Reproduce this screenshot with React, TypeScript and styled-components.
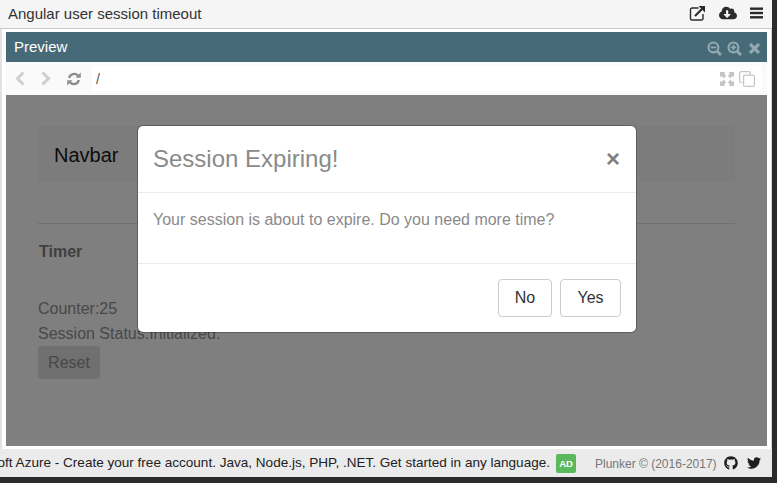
import React from 'react';
import styled, { createGlobalStyle } from 'styled-components';
import { FaCloudDownloadAlt, FaGithub, FaTwitter } from 'react-icons/fa';

const GlobalStyle = createGlobalStyle`
  html, body {
    margin: 0;
    height: 100%;
    overflow: hidden;
    background: #2b2b2b;
    font-family: "Liberation Sans", Arial, sans-serif;
  }
  * {
    box-sizing: border-box;
  }
`

const Frame = styled.div`
  width: 772px;
  height: 477px;
  display: flex;
  flex-direction: column;
  background: #fff;
`

const TopBar = styled.header`
  height: 29px;
  flex: none;
  display: flex;
  align-items: center;
  justify-content: space-between;
  padding: 0 9px 2px 8px;
  background: #f5f5f5;
  border-bottom: 1px solid #c9c9c9;
`

const ProjectTitle = styled.div`
  font-size: 15px;
  color: #333;
`

const ActionRow = styled.div`
  display: flex;
  align-items: center;
  gap: 13px;
  color: #2b2b2b;
`

const Body = styled.main`
  flex: 1;
  min-height: 0;
  display: flex;
  flex-direction: column;
  padding: 3px 4px 3px 4px;
  border-left: 2px solid #e2e2e2;
  border-right: 1px solid #d4d4d4;
`

const Pane = styled.section`
  flex: 1;
  min-height: 0;
  display: flex;
  flex-direction: column;
`

const PaneTitle = styled.div`
  height: 30px;
  flex: none;
  display: flex;
  align-items: center;
  justify-content: space-between;
  padding: 0 7px 2px 8px;
  background: #466a78;
  color: #fff;
  font-size: 15px;
`

const PaneActions = styled.div`
  display: flex;
  align-items: center;
  gap: 5px;
  color: #93a9b2;
  margin-top: 4px;
`

const Toolbar = styled.div`
  height: 33px;
  flex: none;
  display: flex;
  align-items: center;
  background: #fafafa;
  padding: 0 5px 0 8px;
  color: #cfcfcf;
`

const NavButtons = styled.div`
  display: flex;
  align-items: center;
  gap: 12px;
  width: 78px;
`

const AddressBar = styled.div`
  flex: 1;
  height: 25px;
  display: flex;
  align-items: center;
  justify-content: space-between;
  background: #fff;
  padding: 0 7px 0 4px;
  font-size: 14px;
  color: #555;
`

const AddressActions = styled.div`
  display: flex;
  align-items: center;
  gap: 5px;
  color: #c4c4c4;
`

const RefreshIcon = styled.svg`
  margin-left: 3px;
  color: #8c8c8c;
`

const PreviewArea = styled.div`
  position: relative;
  flex: 1;
  min-height: 0;
  padding: 31px 32px;
  background: #fff;
  font-size: 16px;
  line-height: 24px;
  color: #909090;
`

const Navbar = styled.nav`
  height: 56px;
  display: flex;
  align-items: center;
  padding: 1px 16px 0;
  background: #f8f9fa;
  font-size: 20px;
  color: #181818;
`

const Rule = styled.hr`
  margin: 41px 0 0;
  border: 0;
  border-top: 1px solid #e2e2e2;
`

const TimerHeading = styled.div`
  margin: 16px 1px 32px;
  font-weight: 700;
  color: #808080;
`

const StatusLine = styled.div`
  line-height: 25px;
`

const ResetButton = styled.button`
  display: block;
  width: 62px;
  height: 33px;
  margin-top: 0;
  padding: 0;
  border: 0;
  border-radius: 3px;
  background: #e0e0e0;
  color: #909090;
  font: inherit;
`

const Backdrop = styled.div`
  position: absolute;
  inset: 0;
  background: rgba(0, 0, 0, 0.5);
`

const Modal = styled.div`
  position: absolute;
  left: 132px;
  top: 31px;
  width: 498px;
  height: 206px;
  display: flex;
  flex-direction: column;
  background: #fff;
  border-radius: 5px;
  box-shadow: 0 0 0 1px rgba(0, 0, 0, 0.25);
`

const ModalHeader = styled.div`
  height: 67px;
  flex: none;
  display: flex;
  align-items: center;
  justify-content: space-between;
  padding: 0 16px 0 15px;
  border-bottom: 1px solid #e9ecef;
`

const ModalTitle = styled.h5`
  margin: 0;
  font-size: 24px;
  font-weight: 400;
  color: #8a8a8a;
`

const CloseButton = styled.button`
  padding: 0;
  border: 0;
  background: none;
  font: 700 24px/1 "Liberation Sans", Arial, sans-serif;
  color: #7f7f7f;
`

const ModalBody = styled.div`
  height: 71px;
  flex: none;
  padding: 15px 15px 0;
  border-bottom: 1px solid #e9ecef;
  font-size: 16px;
  line-height: 24px;
  color: #8a8a8a;
`

const ModalFooter = styled.div`
  flex: 1;
  display: flex;
  align-items: center;
  justify-content: flex-end;
  gap: 8px;
  padding: 0 15px;
`

const ModalButton = styled.button<{ $width: number }>`
  width: ${p => p.$width}px;
  height: 38px;
  padding: 0;
  background: #fff;
  border: 1px solid #ccc;
  border-radius: 4px;
  font: 16px "Liberation Sans", Arial, sans-serif;
  color: #333;
`

const StatusBar = styled.footer`
  height: 28px;
  flex: none;
  display: flex;
  align-items: center;
  background: #ebebeb;
`

const AdSlot = styled.div`
  flex: 1;
  min-width: 0;
  display: flex;
  align-items: center;
  justify-content: flex-end;
  gap: 6px;
  overflow: hidden;
`

const AdText = styled.span`
  flex: none;
  padding-bottom: 2px;
  white-space: nowrap;
  font-size: 13.55px;
  color: #222;
`

const AdBadge = styled.span`
  flex: none;
  width: 20px;
  height: 19px;
  display: flex;
  align-items: center;
  justify-content: center;
  background: #5cb85c;
  border-radius: 2px;
  color: #fff;
  font-size: 9.5px;
  font-weight: 700;
`

const Credits = styled.div`
  flex: none;
  width: 196px;
  display: flex;
  align-items: center;
  padding-left: 19px;
  color: #777;
`

const CreditText = styled.span`
  padding-top: 2px;
  font-size: 12px;
`

const SocialLinks = styled.div`
  display: flex;
  align-items: center;
  gap: 9px;
  margin-left: 7px;
  color: #1f1f1f;
`

const RemoveGlyph = styled.svg`
  margin-left: 2px;
`

const NewWindowIcon = () => (
  <svg width="17" height="16" viewBox="0 0 17 16" fill="none">
    <path d="M9.5 3H3a1.5 1.5 0 0 0-1.500 1.500v9A1.500 1.500 0 0 0 3 15h9.500a1.500 1.500 0 0 0 1.500-1.500V9" stroke="currentColor" strokeWidth="1.400" />
    <path d="M6 11l7-7" stroke="currentColor" strokeWidth="2.200" />
    <path d="M9.500 1H16v6.500z" fill="currentColor" />
  </svg>
)

const HamburgerIcon = () => (
  <svg width="13" height="12" viewBox="0 0 13 12" fill="currentColor">
    <rect y="0.500" width="13" height="2.400" />
    <rect y="4.800" width="13" height="2.400" />
    <rect y="9.100" width="13" height="2.400" />
  </svg>
)

const ZoomIcon = ({ plus }: { plus?: boolean }) => (
  <svg width="15" height="15" viewBox="0 0 14 14" fill="none" stroke="currentColor">
    <circle cx="6" cy="6" r="4.600" strokeWidth="2" />
    <path d="M9.500 9.500l3.500 3.500" strokeWidth="2.600" />
    <path d="M3.500 6h5" strokeWidth="1.600" />
    {plus && <path d="M6 3.500v5" strokeWidth="1.600" />}
  </svg>
)

const RemoveIcon = () => (
  <RemoveGlyph width="11" height="11" viewBox="0 0 11 11" fill="none" stroke="currentColor" strokeWidth="3.200">
    <path d="M1 1l9 9M10 1l-9 9" />
  </RemoveGlyph>
)

const Chevron = ({ right }: { right?: boolean }) => (
  <svg width="13" height="15" viewBox="0 0 13 15" fill="none" stroke="currentColor" strokeWidth="3">
    <path d={right ? 'M3.500 1.500l6 6-6 6' : 'M9.500 1.500l-6 6 6 6'} />
  </svg>
)

const FullscreenIcon = () => (
  <svg width="14" height="14" viewBox="0 0 14 14" fill="currentColor">
    <path d="M0 0h5.500L4 1.500l2.200 2.200-2.500 2.500L1.500 4 0 5.500zM14 0v5.500L12.500 4l-2.200 2.200-2.500-2.500L10 1.500 8.500 0zM14 14H8.500l1.500-1.500-2.200-2.200 2.500-2.500 2.200 2.200L14 8.500zM0 14V8.500L1.500 10l2.200-2.200 2.500 2.500L4 12.500 5.500 14z" />
  </svg>
)

const DuplicateIcon = () => (
  <svg width="16" height="16" viewBox="0 0 16 16" fill="none" stroke="currentColor" strokeWidth="1.200">
    <path d="M3.500 11.500H2A1.400 1.400 0 0 1 .6 10.100V2A1.400 1.400 0 0 1 2 .6h8A1.400 1.400 0 0 1 11.400 2v1.500" />
    <rect x="4.600" y="4.100" width="10.800" height="11.300" rx="1.500" />
  </svg>
)

const Refresh = () => (
  <RefreshIcon width="14" height="14" viewBox="0 0 14 14" fill="none" stroke="currentColor">
    <path d="M2.200 6A5 5 0 0 1 11 3.800" strokeWidth="2.400" />
    <path d="M8.500 5.800h5.300V.5z" fill="currentColor" stroke="none" />
    <path d="M11.800 8A5 5 0 0 1 3 10.200" strokeWidth="2.400" />
    <path d="M5.500 8.200H.2v5.300z" fill="currentColor" stroke="none" />
  </RefreshIcon>
)

const App = () => {
  return (
    <>
      <GlobalStyle />
      <Frame>
        <TopBar>
          <ProjectTitle>Angular user session timeout</ProjectTitle>
          <ActionRow>
            <NewWindowIcon />
            <FaCloudDownloadAlt size={18} />
            <HamburgerIcon />
          </ActionRow>
        </TopBar>
        <Body>
          <Pane>
            <PaneTitle>
              Preview
              <PaneActions>
                <ZoomIcon />
                <ZoomIcon plus />
                <RemoveIcon />
              </PaneActions>
            </PaneTitle>
            <Toolbar>
              <NavButtons>
                <Chevron />
                <Chevron right />
                <Refresh />
              </NavButtons>
              <AddressBar>
                /
                <AddressActions>
                  <FullscreenIcon />
                  <DuplicateIcon />
                </AddressActions>
              </AddressBar>
            </Toolbar>
            <PreviewArea>
              <Navbar>Navbar</Navbar>
              <Rule />
              <TimerHeading>Timer</TimerHeading>
              <StatusLine>Counter:25</StatusLine>
              <StatusLine>Session Status:Initialized.</StatusLine>
              <ResetButton>Reset</ResetButton>
              <Backdrop />
              <Modal>
                <ModalHeader>
                  <ModalTitle>Session Expiring!</ModalTitle>
                  <CloseButton>×</CloseButton>
                </ModalHeader>
                <ModalBody>Your session is about to expire. Do you need more time?</ModalBody>
                <ModalFooter>
                  <ModalButton $width={54}>No</ModalButton>
                  <ModalButton $width={61}>Yes</ModalButton>
                </ModalFooter>
              </Modal>
            </PreviewArea>
          </Pane>
        </Body>
        <StatusBar>
          <AdSlot>
            <AdText>oft Azure - Create your free account. Java, Node.js, PHP, .NET. Get started in any language.</AdText>
            <AdBadge>AD</AdBadge>
          </AdSlot>
          <Credits>
            <CreditText>Plunker © (2016-2017)</CreditText>
            <SocialLinks>
              <FaGithub size={14} />
              <FaTwitter size={14} />
            </SocialLinks>
          </Credits>
        </StatusBar>
      </Frame>
    </>
  );
}

export default App;
